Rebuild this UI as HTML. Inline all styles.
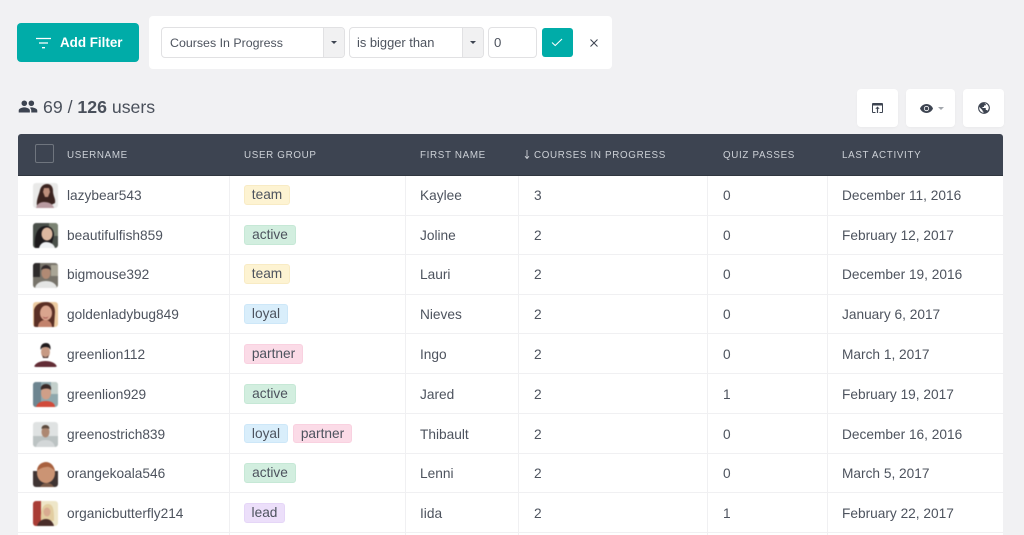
<!DOCTYPE html>
<html><head><meta charset="utf-8">
<style>
html,body{margin:0;padding:0}
body{width:1024px;height:535px;overflow:hidden;background:#f1f1f3;position:relative;font-family:"Liberation Sans",sans-serif;color:#4d535e;font-size:13.7px}
.a{position:absolute}
.t{position:absolute;white-space:nowrap;line-height:20px}
.w{position:absolute;left:0;top:1px;width:1024px;height:534px}
.th{position:absolute;top:148px;line-height:16px;font-size:9.8px;letter-spacing:.67px;color:#ccd0d6;white-space:nowrap}
.tag{position:absolute;border-radius:3px;font-size:13.7px;box-sizing:border-box;color:#4d535e;border:1px solid;display:flex;align-items:center;justify-content:center;height:19.5px}
.team{background:#fdf3d2;border-color:#f8ebc4}
.active{background:#d2eedf;border-color:#c6e8d6}
.loyal{background:#d9eefb;border-color:#cde7f8}
.partner{background:#fbdbe7;border-color:#f9d1e0}
.lead{background:#ecdffa;border-color:#e5d6f7}
.h{position:absolute;height:1px;left:18px;width:985px;background:#f0f0f2}
.v{position:absolute;width:1px;top:176px;height:359px;background:#f0f0f2}
.av{position:absolute;left:33px;width:25px;height:25px;border-radius:3px;filter:blur(.45px)}
.btn{position:absolute;top:89px;height:38px;background:#fff;border-radius:4px;box-shadow:0 1px 2px rgba(0,0,0,.03)}
.sel{position:absolute;top:27px;height:31px;box-sizing:border-box;border:1px solid #e1e1e3;border-radius:4px;background:#fff}
.car{position:absolute;top:0;right:0;height:29px;width:20px;background:#f1f1f2;border-left:1px solid #e1e1e3;border-radius:0 3px 3px 0}
.car:after{content:"";position:absolute;left:7px;top:13px;border-left:3px solid transparent;border-right:3px solid transparent;border-top:3px solid #3d4451}
</style></head><body>

<div class="a" style="left:17px;top:23px;width:122px;height:39px;background:#00aca8;border-radius:4px"></div>
<svg class="a" style="left:36px;top:37px" width="16" height="12" viewBox="0 0 16 12"><path d="M0 1.500h15M3 6h9M6 10.700h3" stroke="#fff" stroke-width="1.300" fill="none"/></svg>
<div class="t" style="left:60px;top:33px;color:#fff;font-weight:bold;font-size:13.4px">Add Filter</div>

<div class="a" style="left:149px;top:16px;width:463px;height:53px;background:#fff;border-radius:4px"></div>
<div class="sel" style="left:161px;width:184px"><div class="car"></div></div>
<div class="t" style="left:170px;top:33px;font-size:12.4px">Courses In Progress</div>
<div class="sel" style="left:349px;width:135px"><div class="car"></div></div>
<div class="t" style="left:357px;top:33px;font-size:12.9px">is bigger than</div>
<div class="sel" style="left:488px;width:49px"></div>
<div class="t" style="left:494px;top:33px;font-size:13.2px">0</div>
<div class="a" style="left:542px;top:28px;width:31px;height:29px;background:#00aca8;border-radius:3px"></div>
<svg class="a" style="left:551px;top:38px" width="12" height="9" viewBox="0 0 12 9"><path d="M1 4.500l3.200 3L11 1" stroke="#fff" stroke-width="1" fill="none"/></svg>
<svg class="a" style="left:590px;top:39px" width="8" height="8" viewBox="0 0 8 8"><path d="M.5.500l7 7M7.500.500l-7 7" stroke="#3d4451" stroke-width="1.050" fill="none"/></svg>

<svg class="a" style="left:18px;top:100px" width="20" height="13" viewBox="0 0 20 14"><path d="M6 6.500a3 3 0 1 0 0-6 3 3 0 0 0 0 6zM13.600 6.500a3 3 0 1 0 0-6 3 3 0 0 0 0 6zM0 13.500v-2.200C0 9.300 3.500 8 6 8s6 1.300 6 3.300v2.200zM13.500 13.500v-2.200c0-1.200-.6-2.200-1.500-3 .6-.2 1.200-.3 1.700-.3 2.300 0 6.300 1.300 6.300 3.300v2.200z" fill="#3d4451"/></svg>
<div class="t" style="left:43px;top:97px;font-size:17.7px;color:#4a505b">69 / <b>126</b> users</div>

<div class="btn" style="left:857px;width:41px"></div>
<div class="btn" style="left:906px;width:49px"></div>
<div class="btn" style="left:963px;width:41px"></div>
<svg class="a" style="left:872px;top:103px" width="11" height="10" viewBox="0 0 11 10"><path d="M1 0h9a1 1 0 0 1 1 1v8a1 1 0 0 1-1 1H7.500V9H10V2.500H1V9h2.500v1H1a1 1 0 0 1-1-1V1a1 1 0 0 1 1-1z" fill="#3d4451"/><path d="M5.500 3.500L3.300 5.700h1.600V10h1.200V5.700h1.600z" fill="#3d4451"/></svg>
<svg class="a" style="left:920px;top:103.500px" width="13" height="9" viewBox="0 0 13 9"><path d="M6.500 0C3.600 0 1.200 1.800 0 4.500 1.200 7.200 3.600 9 6.500 9S11.800 7.200 13 4.500C11.800 1.800 9.400 0 6.500 0z" fill="#3d4451"/><circle cx="6.500" cy="4.500" r="2.600" fill="#fff"/><circle cx="6.500" cy="4.500" r="1.800" fill="#3d4451"/></svg>
<div class="a" style="left:938px;top:107px;border-left:3px solid transparent;border-right:3px solid transparent;border-top:3px solid #a4a8ae"></div>
<svg class="a" style="left:977.500px;top:102px" width="12" height="12" viewBox="0 0 12 12"><circle cx="6" cy="6" r="5.900" fill="#3d4451"/><path d="M6.500 1.200C8.800 1.500 10.600 3.400 10.800 5.800 10.600 7 10.200 8 9.500 8.800 9.300 8.300 8.900 8 8.300 8H7.800V6.500c0-.3-.2-.5-.5-.5H4.500V5h1c.3 0 .5-.2.500-.5v-1h1c.6 0 1-.4 1-1z" fill="#fff"/><path d="M1.300 5L4.500 8.200v.5c0 .5.500 1 1 1v1.100C3.100 10.500 1.200 8.500 1.200 6c0-.3 0-.7.100-1z" fill="#fff"/></svg>

<div class="a" style="left:18px;top:134px;width:985px;height:42px;background:#3d4451;border-radius:3px 3px 0 0;border-bottom:1px solid #30363f;box-sizing:border-box"></div>
<div class="a" style="left:35px;top:144px;width:19px;height:19px;box-sizing:border-box;border:1px solid #6f757e;border-radius:2px"></div>
<div class="th" style="left:67px">USERNAME</div>
<div class="th" style="left:244px">USER GROUP</div>
<div class="th" style="left:420px">FIRST NAME</div>
<div class="th" style="left:534px">COURSES IN PROGRESS</div>
<svg class="a" style="left:524px;top:150px" width="6" height="9" viewBox="0 0 6 9"><path d="M3 0v8.300M1 6.200L3 8.500l2-2.300" stroke="#ccd0d6" stroke-width=".9" fill="none"/></svg>
<div class="th" style="left:723px">QUIZ PASSES</div>
<div class="th" style="left:842px">LAST ACTIVITY</div>

<div class="a" style="left:18px;top:176px;width:985px;height:359px;background:#fff"></div>
<div class="v" style="left:229px"></div><div class="v" style="left:405px"></div><div class="v" style="left:518px"></div><div class="v" style="left:707px"></div><div class="v" style="left:827px"></div>
<div class="h" style="top:215px"></div><div class="h" style="top:254px"></div><div class="h" style="top:294px"></div><div class="h" style="top:333px"></div><div class="h" style="top:373px"></div><div class="h" style="top:413px"></div><div class="h" style="top:453px"></div><div class="h" style="top:492px"></div><div class="h" style="top:532px"></div>

<!-- avatars -->
<svg class="av" style="top:183px" viewBox="0 0 25 25"><rect width="25" height="25" fill="#e9e9e8"/><path d="M4 23C3 17 6 12 7 7c1-4 4-6 7-6 4 0 6 3 6 7 0 5 3 8 2 12l-6 3z" fill="#3b2420"/><path d="M11 5h5l1 4-2 5h-3l-2-5z" fill="#bd8f7c"/><path d="M3 25c1-4 4-6 8-6 5 0 9 2 10 6z" fill="#b89aa0"/></svg>
<svg class="av" style="top:222.500px" viewBox="0 0 25 25"><rect width="25" height="25" fill="#4a504a"/><rect x="16" width="9" height="13" fill="#7b8373"/><path d="M2 25C1 15 3 3 13 3c6 0 8 5 8 9l-3 13z" fill="#1d1a1c"/><ellipse cx="14" cy="11" rx="5.500" ry="6.500" fill="#ddb8a0"/><path d="M6 25c1-4 4-6 7-6 4 0 8 2 9 6z" fill="#eef0f2"/></svg>
<svg class="av" style="top:262.500px" viewBox="0 0 25 25"><rect width="25" height="25" fill="#77736a"/><rect width="7" height="14" fill="#2e2b2b"/><rect x="18" y="2" width="7" height="11" fill="#a9a596"/><ellipse cx="13" cy="10" rx="4.500" ry="6" fill="#b08a74"/><path d="M8 7c0-3 3-5 5-5s5 2 5 5c-3-2-7-2-10 0z" fill="#32292a"/><path d="M2 25c1-5 6-7 11-7s10 2 11 7z" fill="#e4e5e4"/></svg>
<svg class="av" style="top:302px" viewBox="0 0 25 25"><rect width="25" height="25" fill="#eccaa0"/><path d="M1 25V8C2 3 7 0 13 0c6 0 9 4 9 10l-1 15z" fill="#5a2f25"/><ellipse cx="13" cy="11" rx="6" ry="7.500" fill="#d9a58e"/><path d="M9 14c2 2 5 2 7 0l-2 2.500h-3z" fill="#a85a55"/><path d="M5 25c0-5 4-7 7-7 4 0 7 3 7 7z" fill="#c2826c"/></svg>
<svg class="av" style="top:341.500px" viewBox="0 0 25 25"><rect width="25" height="25" fill="#fff"/><ellipse cx="12.500" cy="10" rx="4.500" ry="6" fill="#c79a84"/><path d="M7.500 8C7 3 10 1 13 1s5 2 4.500 7c-1-2-2-3-5-3s-4 1-5 3z" fill="#1f1a1c"/><path d="M9 12c1 4 6 4 7 0l-1 4h-5z" fill="#4a3430"/><path d="M1 25c1-4 6-6 11.500-6S23 21 24 25z" fill="#622c35"/></svg>
<svg class="av" style="top:381.500px" viewBox="0 0 25 25"><rect width="25" height="25" fill="#8fa8ad"/><rect width="8" height="25" fill="#6d8590"/><rect x="18" width="7" height="12" fill="#c3cfcb"/><ellipse cx="13" cy="11" rx="5" ry="6.500" fill="#cf9f88"/><path d="M8 8c-1-4 2-6 5-6s6 2 5 6c-2-2-7-2-10 0z" fill="#3a2a28"/><path d="M3 25c1-4 5-6 10-6s9 2 9 6z" fill="#d14a3a"/></svg>
<svg class="av" style="top:421.500px" viewBox="0 0 25 25"><rect width="25" height="25" fill="#dfe2e2"/><rect y="14" width="25" height="11" fill="#bcc3c3"/><ellipse cx="12.500" cy="10" rx="4" ry="5.500" fill="#ad8872"/><path d="M8.500 7c0-3 2-4 4-4s4 1 4 4c-2-1-6-1-8 0z" fill="#5c4a3d"/><path d="M3 25c1-5 5-7 9.500-7s8.500 2 9.500 7z" fill="#d3d7d8"/></svg>
<svg class="av" style="top:461.500px" viewBox="0 0 25 25"><rect width="25" height="25" fill="#fff"/><rect y="9" width="25" height="16" fill="#3f3433"/><ellipse cx="13" cy="11" rx="9" ry="10" fill="#cb9474"/><path d="M4 9c0-6 5-9 9-9s8 3 9 9c-3-3-6-5-9-4-3 0-7 2-9 4z" fill="#a8613f"/><path d="M7 25c2-3 4-4 7-4s5 1 7 4z" fill="#7a5a48"/></svg>
<svg class="av" style="top:501px" viewBox="0 0 25 25"><rect width="25" height="25" fill="#eee6c8"/><rect width="8" height="25" fill="#a93c35"/><path d="M8 20c-1-8 1-17 7-17s6 8 6 17z" fill="#e2cda0"/><ellipse cx="14" cy="11" rx="3.500" ry="4.500" fill="#d8ab90"/><path d="M4 25c1-4 5-7 9-7s7 3 8 7z" fill="#4a2e2a"/></svg>

<!-- tags -->
<div class="tag team" style="left:244px;top:185px;width:46px">team</div>
<div class="tag active" style="left:244px;top:225px;width:52px">active</div>
<div class="tag team" style="left:244px;top:264px;width:46px">team</div>
<div class="tag loyal" style="left:244px;top:304px;width:44px">loyal</div>
<div class="tag partner" style="left:244px;top:344px;width:59px">partner</div>
<div class="tag active" style="left:244px;top:384px;width:52px">active</div>
<div class="tag loyal" style="left:244px;top:423.500px;width:44px">loyal</div>
<div class="tag partner" style="left:293px;top:423.500px;width:59px">partner</div>
<div class="tag active" style="left:244px;top:463px;width:52px">active</div>
<div class="tag lead" style="left:244px;top:503px;width:41px">lead</div>

<div class="w">
<!-- usernames -->
<div class="t" style="left:67px;top:185px">lazybear543</div>
<div class="t" style="left:67px;top:225px">beautifulfish859</div>
<div class="t" style="left:67px;top:264px">bigmouse392</div>
<div class="t" style="left:67px;top:304px">goldenladybug849</div>
<div class="t" style="left:67px;top:344px">greenlion112</div>
<div class="t" style="left:67px;top:384px">greenlion929</div>
<div class="t" style="left:67px;top:424px">greenostrich839</div>
<div class="t" style="left:67px;top:463px">orangekoala546</div>
<div class="t" style="left:67px;top:503px">organicbutterfly214</div>

<!-- first name -->
<div class="t" style="left:420px;top:185px">Kaylee</div>
<div class="t" style="left:420px;top:225px">Joline</div>
<div class="t" style="left:420px;top:264px">Lauri</div>
<div class="t" style="left:420px;top:304px">Nieves</div>
<div class="t" style="left:420px;top:344px">Ingo</div>
<div class="t" style="left:420px;top:384px">Jared</div>
<div class="t" style="left:420px;top:424px">Thibault</div>
<div class="t" style="left:420px;top:463px">Lenni</div>
<div class="t" style="left:420px;top:503px">Iida</div>

<!-- courses -->
<div class="t" style="left:534px;top:185px">3</div>
<div class="t" style="left:534px;top:225px">2</div>
<div class="t" style="left:534px;top:264px">2</div>
<div class="t" style="left:534px;top:304px">2</div>
<div class="t" style="left:534px;top:344px">2</div>
<div class="t" style="left:534px;top:384px">2</div>
<div class="t" style="left:534px;top:424px">2</div>
<div class="t" style="left:534px;top:463px">2</div>
<div class="t" style="left:534px;top:503px">2</div>

<!-- quiz -->
<div class="t" style="left:723px;top:185px">0</div>
<div class="t" style="left:723px;top:225px">0</div>
<div class="t" style="left:723px;top:264px">0</div>
<div class="t" style="left:723px;top:304px">0</div>
<div class="t" style="left:723px;top:344px">0</div>
<div class="t" style="left:723px;top:384px">1</div>
<div class="t" style="left:723px;top:424px">0</div>
<div class="t" style="left:723px;top:463px">0</div>
<div class="t" style="left:723px;top:503px">1</div>

<!-- last activity -->
<div class="t" style="left:842px;top:185px">December 11, 2016</div>
<div class="t" style="left:842px;top:225px">February 12, 2017</div>
<div class="t" style="left:842px;top:264px">December 19, 2016</div>
<div class="t" style="left:842px;top:304px">January 6, 2017</div>
<div class="t" style="left:842px;top:344px">March 1, 2017</div>
<div class="t" style="left:842px;top:384px">February 19, 2017</div>
<div class="t" style="left:842px;top:424px">December 16, 2016</div>
<div class="t" style="left:842px;top:463px">March 5, 2017</div>
<div class="t" style="left:842px;top:503px">February 22, 2017</div>
</div>

</body></html>
